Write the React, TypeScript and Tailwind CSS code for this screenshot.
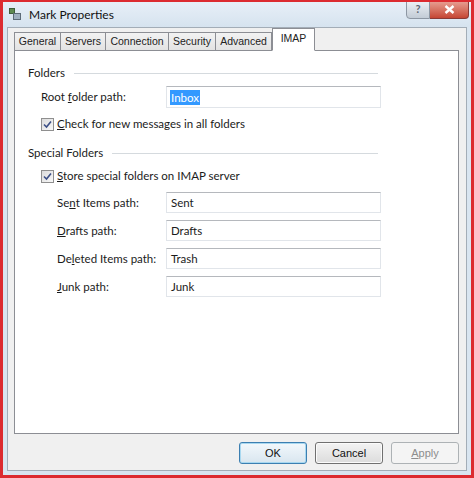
import { ReactNode } from "react";

const tabs = [
  { label: "General", w: "w-[47px]" },
  { label: "Servers", w: "w-[45px]" },
  { label: "Connection", w: "w-[63px]" },
  { label: "Security", w: "w-[47px]" },
  { label: "Advanced", w: "w-[56px]" },
];

function Heading({ children }: { children: ReactNode }) {
  return (
    <div className="flex items-center w-[350px] h-[16px]">
      <span>{children}</span>
      <div className="flex-1 ml-[9px] border-t border-[#d5dade]" />
    </div>
  );
}

function Check({ children }: { children: ReactNode }) {
  return (
    <div className="flex items-center h-[16px] pl-[13px]">
      <div className="w-[13px] h-[13px] border border-[#8f8f8f] bg-gradient-to-br from-[#dcdcdc] to-[#f8f8f8] p-[1px] flex items-center justify-center">
        <svg width="9" height="9" viewBox="0 0 9 9">
          <path d="M1 4.5 L3.5 7 L8 1.5" fill="none" stroke="#3c4f86" strokeWidth="1.6" />
        </svg>
      </div>
      <span className="ml-[3px]">{children}</span>
    </div>
  );
}

function Field({ label, value, indent }: { label: ReactNode; value: string; indent?: boolean }) {
  return (
    <div className={"flex items-center " + (indent ? "pl-[29px]" : "pl-[13px]")}>
      <div className={indent ? "w-[109px]" : "w-[125px]"}>{label}</div>
      <div className="w-[215px] h-[21px] bg-white border border-[#e1e5ea] border-t-[#b5b8bd] flex items-center px-[4px]">
        {value}
      </div>
    </div>
  );
}

export default function App() {
  return (
    <div
      className="w-[474px] h-[478px] border-[3px] border-t-[2px] border-[#dc2b30] bg-[#d9e5f0] flex flex-col overflow-hidden text-[11.5px] text-[#1b1b1b]"
      style={{ fontFamily: "Lato, 'Liberation Sans', sans-serif" }}
    >
      {/* title bar */}
      <div className="h-[25px] shrink-0 flex items-start bg-gradient-to-b from-[#e7eff7] to-[#d6e3ef] relative">
        <div className="mt-[5px] ml-[5px] w-[14px] h-[14px] relative">
          <div className="absolute left-[1px] top-[1px] w-[6px] h-[6px] bg-[#5f8a52] border border-[#3f5f3a]" />
          <div className="absolute left-[5px] top-[6px] w-[8px] h-[7px] bg-[#9fb0c0] border border-[#5d6b78]" />
        </div>
        <span className="ml-[7px] mt-[4px] text-[12px] text-[#111]">Mark Properties</span>
        <div className="absolute right-[2px] top-[-2px] flex">
          <div className="w-[24px] h-[19px] rounded-bl-[4px] border border-[#8d97a3] bg-gradient-to-b from-[#eef2f6] to-[#c3ccd6] flex items-center justify-center text-[11px] font-bold text-[#5a6470]">
            ?
          </div>
          <div className="w-[39px] h-[19px] rounded-br-[4px] border border-l-0 border-[#8a3a35] bg-gradient-to-b from-[#e7a094] to-[#c54533] flex items-center justify-center">
            <svg width="11" height="9" viewBox="0 0 11 9">
              <path d="M1.5 1 L9.5 8 M9.5 1 L1.5 8" stroke="#fff" strokeWidth="2.4" />
            </svg>
          </div>
        </div>
      </div>

      {/* client area */}
      <div className="flex-1 mx-[4px] mb-[4px] bg-[#f0f0f0] border border-[#a3adb7] flex flex-col pl-[6px] pr-[7px] pt-[1px]">
        <div className="flex items-end h-[21px] relative z-10" style={{ fontFamily: "'Liberation Sans', sans-serif" }}>
          {tabs.map((t, i) => (
            <div
              key={t.label}
              className={
                t.w +
                " h-[19px] mb-[-1px] flex items-center justify-center text-[10.5px] text-[#222] border border-[#8c8e94] bg-gradient-to-b from-[#f2f2f2] to-[#e3e3e3] " +
                (i > 0 ? "border-l-0" : "")
              }
            >
              {t.label}
            </div>
          ))}
          <div className="w-[43px] h-[23px] mb-[-1px] border border-[#8c8e94] border-b-white bg-white flex items-start justify-center pt-[2px] text-[10.5px] text-[#222]">
            IMAP
          </div>
        </div>

        <div className="h-[384px] bg-white border border-[#8c8e94] pl-[13px] pt-[14px] flex flex-col">
          <Heading>Folders</Heading>
          <div className="mt-[5px]">
            <div className="flex items-center pl-[13px]">
              <div className="w-[125px]">
                Root <u>f</u>older path:
              </div>
              <div className="w-[215px] h-[22px] bg-white border border-[#e1e5ea] border-t-[#b5b8bd] flex items-center px-[3px]">
                <span className="bg-[#3399ff] text-white px-[1px] leading-[15px]">Inbox</span>
              </div>
            </div>
          </div>
          <div className="mt-[8px]">
            <Check>
              <u>C</u>heck for new messages in all folders
            </Check>
          </div>
          <div className="mt-[13px]">
            <Heading>Special Folders</Heading>
          </div>
          <div className="mt-[7px]">
            <Check>
              <u>S</u>tore special folders on IMAP server
            </Check>
          </div>
          <div className="mt-[8px] flex flex-col gap-[7px]">
            <Field indent label={<>Se<u>n</u>t Items path:</>} value="Sent" />
            <Field indent label={<><u>D</u>rafts path:</>} value="Drafts" />
            <Field indent label={<>De<u>l</u>eted Items path:</>} value="Trash" />
            <Field indent label={<><u>J</u>unk path:</>} value="Junk" />
          </div>
        </div>

        <div className="flex justify-end gap-[8px] mt-[8px]" style={{ fontFamily: "'Liberation Sans', sans-serif" }}>
          <button className="w-[68px] h-[22px] rounded-[3px] border border-[#3c7fb1] bg-gradient-to-b from-[#f2f8fc] to-[#d9e6ef] text-[11px] text-[#111] shadow-[inset_0_0_0_1px_#a8d8f0]">
            OK
          </button>
          <button className="w-[68px] h-[22px] rounded-[3px] border border-[#707070] bg-gradient-to-b from-[#f3f3f3] to-[#dcdcdc] text-[11px] text-[#111] shadow-[inset_0_0_0_1px_#fbfbfb]">
            Cancel
          </button>
          <button className="w-[68px] h-[22px] rounded-[3px] border border-[#adb2b5] bg-[#f4f4f4] text-[11px] text-[#8d8d8d]">
            <u>A</u>pply
          </button>
        </div>
      </div>
    </div>
  );
}
